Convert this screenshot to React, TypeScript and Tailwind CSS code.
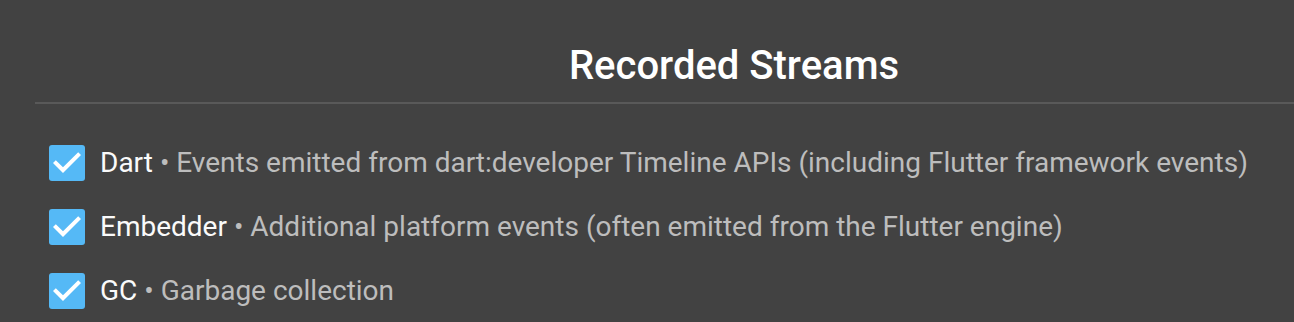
import React from "react";

const streams = [
  { name: "Dart", desc: "Events emitted from dart:developer Timeline APIs (including Flutter framework events)" },
  { name: "Embedder", desc: "Additional platform events (often emitted from the Flutter engine)" },
  { name: "GC", desc: "Garbage collection" },
];

function CheckBox() {
  return (
    <svg width="36" height="36" viewBox="3 3 18 18" className="shrink-0">
      <rect x="3" y="3" width="18" height="18" rx="1.5" fill="#55b9f6" />
      <path d="M10 17l-5-5 1.41-1.41L10 14.17l7.59-7.59L19 8l-9 9z" fill="#ffffff" />
    </svg>
  );
}

export default function App() {
  return (
    <div className="h-[322px] w-full overflow-hidden bg-[#424242] font-['Roboto',sans-serif]">
      <div className="ml-[35px] w-[1398px]">
        <div className="pt-[42px] pb-[12px] text-center text-[40px] font-medium leading-[48px] text-white">
          Recorded Streams
        </div>
        <div className="h-[2px] bg-[#595959]" />
        <div className="flex flex-col gap-[28px] pl-[14px] pt-[41px]">
          {streams.map((s) => (
            <div key={s.name} className="flex items-center gap-[15px] text-[28px] leading-[36px]">
              <CheckBox />
              <div className="whitespace-nowrap">
                <span className="text-[#fafafa]">{s.name}</span>
                <span className="text-[#bdbdbd]"> • {s.desc}</span>
              </div>
            </div>
          ))}
        </div>
      </div>
    </div>
  );
}
